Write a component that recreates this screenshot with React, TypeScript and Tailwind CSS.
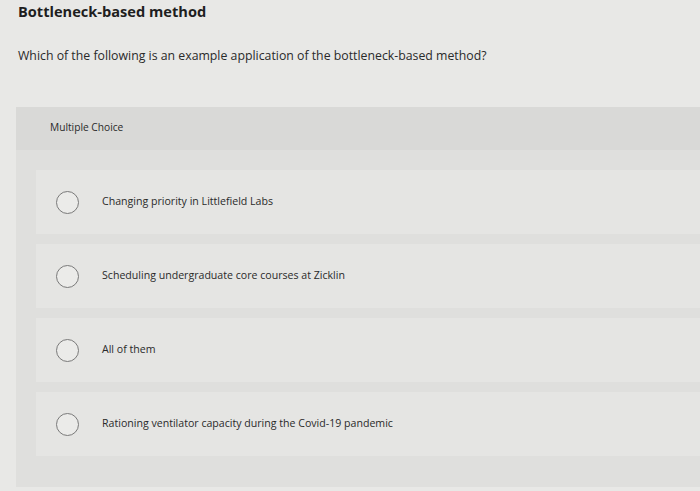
const options = [
  "Changing priority in Littlefield Labs",
  "Scheduling undergraduate core courses at Zicklin",
  "All of them",
  "Rationing ventilator capacity during the Covid-19 pandemic",
];

function Option({ label }: { label: string }) {
  return (
    <div className="flex h-[64px] items-center bg-[#e5e5e3] pl-[20px]">
      <span className="block h-[23px] w-[23px] shrink-0 rounded-full border-[1.5px] border-[#7a7a7a] bg-[#ebebe9]" />
      <span className="ml-[23px] text-[10.6px] text-[#2a2a2a]">{label}</span>
    </div>
  );
}

export default function App() {
  return (
    <div
      className="h-[491px] w-[700px] overflow-hidden bg-[#e8e8e6] text-[#1e1e1e]"
      style={{ fontFamily: "'Open Sans', 'Liberation Sans', sans-serif" }}
    >
      <h1 className="pl-[18px] text-[14.6px] font-bold leading-[22px]">
        Bottleneck-based method
      </h1>
      <p className="mt-[24px] pl-[18px] text-[12.3px] leading-[20px] text-[#2a2a2a]">
        Which of the following is an example application of the bottleneck-based method?
      </p>
      <div className="ml-[16px] mt-[41px] h-[380px] bg-[#dfdfdd]">
        <div className="h-[43px] bg-[#d9d9d7] pl-[34px] pt-[13px] text-[10.2px] text-[#2a2a2a]">
          Multiple Choice
        </div>
        <div className="flex flex-col gap-[10px] pl-[20px] pt-[20px]">
          {options.map((o) => (
            <Option key={o} label={o} />
          ))}
        </div>
      </div>
    </div>
  );
}
